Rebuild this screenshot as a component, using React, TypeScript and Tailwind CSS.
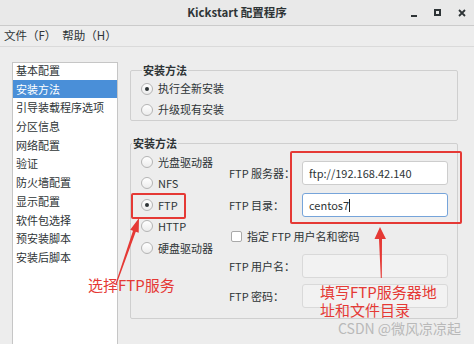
import React from "react";

const sideItems = [
  "基本配置",
  "安装方法",
  "引导装载程序选项",
  "分区信息",
  "网络配置",
  "验证",
  "防火墙配置",
  "显示配置",
  "软件包选择",
  "预安装脚本",
  "安装后脚本",
];

function Radio({ checked }: { checked?: boolean }) {
  return (
    <span className="w-[12px] h-[12px] rounded-full border border-[#b4b4b4] bg-gradient-to-b from-white to-[#ececec] flex items-center justify-center shrink-0">
      {checked && <span className="w-[4px] h-[4px] rounded-full bg-[#2e3436]" />}
    </span>
  );
}

function RadioRow({ label, checked, h }: { label: string; checked?: boolean; h: string }) {
  return (
    <div className={`flex items-center gap-[5px] ${h}`}>
      <Radio checked={checked} />
      <span>{label}</span>
    </div>
  );
}

function Field({
  label,
  value,
  focused,
  disabled,
  cursor,
  mt,
}: {
  label: string;
  value?: string;
  focused?: boolean;
  disabled?: boolean;
  cursor?: boolean;
  mt: string;
}) {
  return (
    <div className={`flex items-center ${mt}`}>
      <span className="w-[73px] shrink-0">{label}</span>
      <div
        className={`w-[146px] h-[24px] rounded-[3px] border flex items-center pl-[6px] text-[11px] ${
          focused
            ? "border-[#76a4da] bg-white"
            : disabled
            ? "border-[#d9d9d9] bg-[#f2f2f2]"
            : "border-[#cdcdcd] bg-white"
        }`}
      >
        {value}
        {cursor && <span className="w-px h-[13px] bg-[#222]" />}
      </div>
    </div>
  );
}

export default function App() {
  return (
    <div className="relative w-[474px] h-[344px] overflow-hidden bg-[#ededed] text-[#2e3436] text-[11px] font-['Noto_Sans_CJK_SC',sans-serif]">
      {/* Title bar */}
      <div className="relative h-[26px] bg-[#e9e9e9] border-b border-[#cbcbcb] flex items-center justify-center">
        <span className="text-[11.5px] font-bold text-[#2e3436]">Kickstart 配置程序</span>
        <div className="absolute right-[8px] top-0 h-full flex items-center gap-[17px]">
          <span className="w-[6px] h-[2px] bg-[#2e3436] mt-[6px]" />
          <span className="w-[7px] h-[7px] border-2 border-[#2e3436]" />
          <svg width="8" height="8" viewBox="0 0 8 8">
            <path d="M1 1L7 7M7 1L1 7" stroke="#2e3436" strokeWidth="1.8" />
          </svg>
        </div>
      </div>

      {/* Menu bar */}
      <div className="h-[21px] flex items-center pl-[4px] border-b border-[#dadada] text-[11.5px]">
        <span>文件（F）</span>
        <span className="ml-[6px]">帮助（H）</span>
      </div>

      {/* Body */}
      <div className="flex pl-[12px] pt-[15px]">
        <div className="w-[106px] h-[300px] shrink-0 bg-white border border-[#c6c6c6] overflow-hidden">
          <div className="-mt-[2px]">
            {sideItems.map((it, i) => (
              <div
                key={it}
                className={`h-[18.7px] leading-[18.7px] pl-[3px] ${
                  i === 1 ? "bg-[#4a8fd8] text-white" : ""
                }`}
              >
                {it}
              </div>
            ))}
          </div>
        </div>

        <div className="ml-[12px] w-[328px] mt-[1px]">
          <fieldset className="border border-[#cfcfcf] rounded-[2px] pl-[10px]">
            <legend className="ml-[1px] px-[1px] font-bold leading-[14px]">安装方法</legend>
            <div className="pt-[1px]">
              <RadioRow label="执行全新安装" checked h="h-[21px]" />
              <RadioRow label="升级现有安装" h="h-[21px]" />
            </div>
          </fieldset>

          <fieldset className="mt-[15px] border border-[#cfcfcf] rounded-[2px]">
            <legend className="ml-[1px] px-[1px] font-bold leading-[14px]">安装方法</legend>
            <div className="flex">
              <div className="w-[98px] pl-[10px] pt-[1px] shrink-0">
                <RadioRow label="光盘驱动器" h="h-[21.5px]" />
                <RadioRow label="NFS" h="h-[21.5px]" />
                <RadioRow label="FTP" checked h="h-[21.5px]" />
                <RadioRow label="HTTP" h="h-[21.5px]" />
                <RadioRow label="硬盘驱动器" h="h-[21.5px]" />
              </div>
              <div className="flex flex-col pt-[11px] pb-[10px]">
                <Field label="FTP 服务器：" value="ftp://192.168.42.140" mt="" />
                <Field label="FTP 目录：" value="centos7" focused cursor mt="mt-[8px]" />
                <div className="mt-[10px] h-[18px] flex items-center gap-[5px] pl-[2px]">
                  <span className="w-[11px] h-[11px] rounded-[2px] border border-[#a9a9a9] bg-white" />
                  <span>指定 FTP 用户名和密码</span>
                </div>
                <Field label="FTP 用户名：" disabled mt="mt-[9px]" />
                <Field label="FTP 密码：" disabled mt="mt-[6px]" />
              </div>
            </div>
          </fieldset>
        </div>
      </div>

      {/* Annotations */}
      <div className="absolute left-[131px] top-[193px] w-[55px] h-[26px] border-2 border-[#e53935] rounded-[2px]" />
      <div className="absolute left-[290px] top-[151px] w-[172px] h-[73px] border-2 border-[#e53935] rounded-[2px]" />
      <svg className="absolute inset-0 pointer-events-none" width="474" height="344" viewBox="0 0 474 344">
        <polygon
          points="139,218 138.7,232.7 135.8,231.7 116.5,284.2 115.5,283.8 133,230.7 130.2,229.7"
          fill="#e53935"
        />
        <polygon points="380,227 386,239 382,239 381.8,278 380.8,278 379,239 374.5,239" fill="#e53935" />
      </svg>
      <div className="absolute left-[88px] top-[276px] text-[15px] leading-[18px] text-[#e53935]">
        选择FTP服务
      </div>
      <div className="absolute left-[320px] top-[283px] text-[15px] leading-[18px] text-[#e53935]">
        填写FTP服务器地
        <br />
        址和文件目录
      </div>
      <div className="absolute left-[338px] top-[320px] text-[14px] leading-[16px] text-[#b9b9b9]">
        CSDN @微风凉凉起
      </div>
    </div>
  );
}
